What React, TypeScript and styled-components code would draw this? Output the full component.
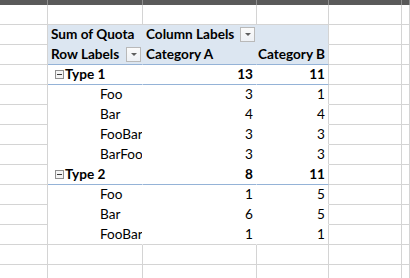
import React from "react";
import styled, { createGlobalStyle } from "styled-components";

const Global = createGlobalStyle`
  html, body { margin: 0; padding: 0; background: #ffffff; }
  body { font-family: "Lato", "Liberation Sans", sans-serif; }
`;

const COLS = "48px 95px 114px 72px 73px 8px";
const GRID = "#d4d4d4";
const BLUE_BG = "#dce6f1";
const BLUE_LINE = "#95b3d7";

const Sheet = styled.div`
  width: 410px;
  height: 278px;
  overflow: hidden;
  display: flex;
  flex-direction: column;
  background: #ffffff;
  color: #000000;
  font-size: 13.6px;
`;

const TopBar = styled.div`
  display: grid;
  grid-template-columns: ${COLS};
  height: 5px;
  flex: none;
  background: #5a5a5a;
`;

const BarSeg = styled.div`
  border-right: 1px solid #8e8e8e;
  box-sizing: border-box;
`;

const Row = styled.div`
  display: grid;
  grid-template-columns: ${COLS};
  height: 20px;
  flex: none;
`;

type CellProps = {
  $bg?: string;
  $bottom?: string;
  $right?: string;
  $align?: "left" | "right";
  $bold?: boolean;
  $pad?: number;
};

const Cell = styled.div<CellProps>`
  box-sizing: border-box;
  display: flex;
  align-items: center;
  justify-content: ${(p) => (p.$align === "right" ? "flex-end" : "flex-start")};
  gap: 0;
  padding: 0 3px 1px ${(p) => p.$pad ?? 3}px;
  background: ${(p) => p.$bg ?? "transparent"};
  border-bottom: 1px solid ${(p) => p.$bottom ?? "transparent"};
  border-right: 1px solid ${(p) => p.$right ?? "transparent"};
  font-weight: ${(p) => (p.$bold ? 700 : 400)};
  white-space: nowrap;
  overflow: hidden;
`;

const HeadCell = styled(Cell)`
  justify-content: space-between;
  padding-right: 1px;
`;

const DropButton = styled.span`
  box-sizing: border-box;
  width: 15px;
  height: 15px;
  flex: none;
  border: 1px solid #b9b9b9;
  background: linear-gradient(#fbfbfb, #eef1f5);
  display: flex;
  align-items: center;
  justify-content: center;
`;

const Arrow = styled.span`
  width: 0;
  height: 0;
  border-left: 3px solid transparent;
  border-right: 3px solid transparent;
  border-top: 3px solid #5f5f5f;
  margin-top: 1px;
`;

const MinusBox = styled.span`
  box-sizing: border-box;
  width: 9px;
  height: 9px;
  flex: none;
  margin-right: 1px;
  border: 1px solid #8f8f8f;
  background: #f4f4f4;
  display: flex;
  align-items: center;
  justify-content: center;
  &::after {
    content: "";
    width: 5px;
    height: 1px;
    background: #3a3a3a;
  }
`;

const Spacer = styled.div`
  flex: 1;
  display: flex;
  flex-direction: column;
`;

const Dropdown = () => (
  <DropButton>
    <Arrow />
  </DropButton>
);

const GridCell = () => <Cell $bottom={GRID} $right={GRID} />;

const EmptyRow = () => (
  <Row>
    {Array.from({ length: 6 }).map((_, i) => (
      <GridCell key={i} />
    ))}
  </Row>
);

const Tail = () => (
  <>
    <GridCell />
    <GridCell />
  </>
);

type Item = { label: string; a: number; b: number };
type Group = { name: string; a: number; b: number; items: Item[] };

const groups: Group[] = [
  {
    name: "Type 1",
    a: 13,
    b: 11,
    items: [
      { label: "Foo", a: 3, b: 1 },
      { label: "Bar", a: 4, b: 4 },
      { label: "FooBar", a: 3, b: 3 },
      { label: "BarFoo", a: 3, b: 3 },
    ],
  },
  {
    name: "Type 2",
    a: 8,
    b: 11,
    items: [
      { label: "Foo", a: 1, b: 5 },
      { label: "Bar", a: 6, b: 5 },
      { label: "FooBar", a: 1, b: 1 },
    ],
  },
];

export default function App() {
  return (
    <>
      <Global />
      <Sheet>
        <TopBar>
          {Array.from({ length: 6 }).map((_, i) => (
            <BarSeg key={i} />
          ))}
        </TopBar>
        <EmptyRow />
        <Row>
          <GridCell />
          <Cell $bg={BLUE_BG} $bold>
            Sum of Quota
          </Cell>
          <HeadCell $bg={BLUE_BG} $bold>
            Column Labels
            <Dropdown />
          </HeadCell>
          <Cell $bg={BLUE_BG} $right={GRID} />
          <Tail />
        </Row>
        <Row>
          <GridCell />
          <HeadCell $bg={BLUE_BG} $bottom={BLUE_LINE} $bold>
            Row Labels
            <Dropdown />
          </HeadCell>
          <Cell $bg={BLUE_BG} $bottom={BLUE_LINE} $bold>
            Category A
          </Cell>
          <Cell $bg={BLUE_BG} $bottom={BLUE_LINE} $right={GRID} $bold $align="right">
            Category B
          </Cell>
          <Tail />
        </Row>
        {groups.map((g, gi) => (
          <React.Fragment key={g.name}>
            <Row>
              <GridCell />
              <Cell $bottom={BLUE_LINE} $bold $pad={7}>
                <MinusBox />
                {g.name}
              </Cell>
              <Cell $bottom={BLUE_LINE} $bold $align="right">
                {g.a}
              </Cell>
              <Cell $bottom={BLUE_LINE} $right={GRID} $bold $align="right">
                {g.b}
              </Cell>
              <Tail />
            </Row>
            {g.items.map((it, ii) => {
              const last = gi === groups.length - 1 && ii === g.items.length - 1;
              const bottom = last ? GRID : undefined;
              return (
                <Row key={it.label}>
                  <GridCell />
                  <Cell $bottom={bottom} $pad={52}>
                    {it.label}
                  </Cell>
                  <Cell $bottom={bottom} $align="right">
                    {it.a}
                  </Cell>
                  <Cell $bottom={bottom} $right={GRID} $align="right">
                    {it.b}
                  </Cell>
                  <Tail />
                </Row>
              );
            })}
          </React.Fragment>
        ))}
        <Spacer>
          <EmptyRow />
          <EmptyRow />
        </Spacer>
      </Sheet>
    </>
  );
}
